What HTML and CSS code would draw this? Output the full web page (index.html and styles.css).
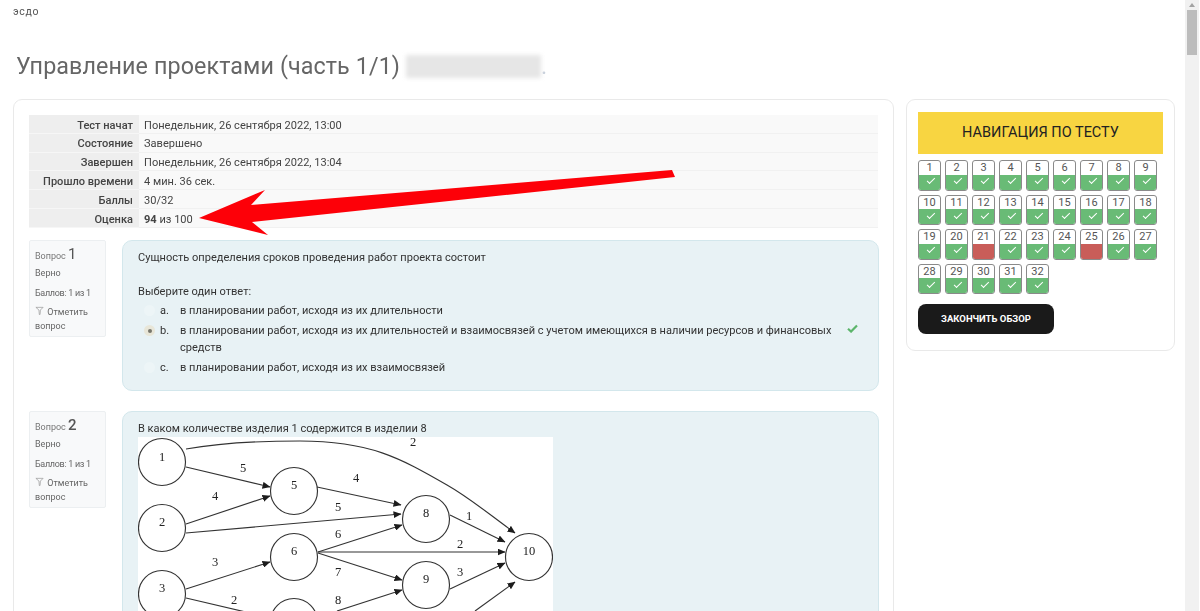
FILE: index.html
```html
<!DOCTYPE html>
<html lang="ru">
<head>
<meta charset="utf-8">
<title>Управление проектами</title>
<link rel="stylesheet" href="styles.css">
</head>
<body>
<div class="page">
  <div class="content">
    <div class="brand">эсдо</div>
    <h1 class="title">Управление проектами (часть 1/1) <span class="blurred"></span><span class="dot">.</span></h1>
    <div class="columns">
      <main class="card main-card">
        <div class="summary">
          <div class="k">Тест начат</div><div class="v">Понедельник, 26 сентября 2022, 13:00</div>
          <div class="k">Состояние</div><div class="v">Завершено</div>
          <div class="k">Завершен</div><div class="v">Понедельник, 26 сентября 2022, 13:04</div>
          <div class="k">Прошло времени</div><div class="v">4 мин. 36 сек.</div>
          <div class="k">Баллы</div><div class="v">30/32</div>
          <div class="k">Оценка</div><div class="v"><b>94</b> из 100</div>
        </div>

        <section class="question">
          <aside class="info">
            <div class="q-no">Вопрос <span>1</span></div>
            <div class="q-line">Верно</div>
            <div class="q-line">Баллов: 1 из 1</div>
            <div class="q-flag"><svg class="flag" viewBox="0 0 10 10"><path d="M1 1.5h8L6 4.5 5.6 9.5H4.8L4.4 4.5z" fill="none" stroke="#999" stroke-width=".8"/></svg> Отметить<br>вопрос</div>
          </aside>
          <div class="q-body">
            <div class="q-text">Сущность определения сроков проведения работ проекта состоит</div>
            <div class="q-prompt">Выберите один ответ:</div>
            <div class="answer"><span class="radio"></span><span class="letter">a.</span><span class="a-text">в планировании работ, исходя из их длительности</span></div>
            <div class="answer"><span class="radio checked"></span><span class="letter">b.</span><span class="a-text">в планировании работ, исходя из их длительностей и взаимосвязей с учетом имеющихся в наличии ресурсов и финансовых средств</span><svg class="ok" viewBox="0 0 12 10"><path d="M1 5.2 4.4 8.4 11 1.6" fill="none" stroke="#5cb56b" stroke-width="2.4"/></svg></div>
            <div class="answer"><span class="radio"></span><span class="letter">c.</span><span class="a-text">в планировании работ, исходя из их взаимосвязей</span></div>
          </div>
        </section>

        <section class="question second">
          <aside class="info">
            <div class="q-no">Вопрос <span class="strong">2</span></div>
            <div class="q-line">Верно</div>
            <div class="q-line">Баллов: 1 из 1</div>
            <div class="q-flag"><svg class="flag" viewBox="0 0 10 10"><path d="M1 1.5h8L6 4.5 5.6 9.5H4.8L4.4 4.5z" fill="none" stroke="#999" stroke-width=".8"/></svg> Отметить<br>вопрос</div>
          </aside>
          <div class="q-body">
            <div class="q-text tight">В каком количестве изделия 1 содержится в изделии 8</div>
            <svg class="diagram" viewBox="138 437 415 174">
              <defs>
                <marker id="ah" markerWidth="8" markerHeight="7" refX="7.5" refY="3.5" orient="auto" markerUnits="userSpaceOnUse"><path d="M0 0 8 3.5 0 7z" fill="#1c1c1c"/></marker>
              </defs>
              <g fill="none" stroke="#333" stroke-width="1.15">
                <circle cx="162" cy="462" r="23.5"/>
                <circle cx="162" cy="528" r="23.5"/>
                <circle cx="162" cy="594" r="23.5"/>
                <circle cx="294" cy="491" r="23.5"/>
                <circle cx="294" cy="557" r="23.5"/>
                <circle cx="294" cy="622" r="23.5"/>
                <circle cx="426" cy="519" r="23.5"/>
                <circle cx="426" cy="585" r="23.5"/>
                <circle cx="529" cy="557" r="23.5"/>
                <path marker-end="url(#ah)" d="M186 449C220 443 260 441 300 441C370 441 400 458 447 485C470 498 490 515 515 533"/>
                <path marker-end="url(#ah)" d="M186 467 270 487"/>
                <path marker-end="url(#ah)" d="M186 524 270 496"/>
                <path marker-end="url(#ah)" d="M186 533 401 514"/>
                <path marker-end="url(#ah)" d="M186 589 270 562"/>
                <path d="M186 598 250 613"/>
                <path marker-end="url(#ah)" d="M317 487 401 505"/>
                <path marker-end="url(#ah)" d="M318 552 402 525"/>
                <path marker-end="url(#ah)" d="M318 552H505"/>
                <path marker-end="url(#ah)" d="M318 553 402 580"/>
                <path marker-end="url(#ah)" d="M337 611 402 590"/>
                <path marker-end="url(#ah)" d="M450 515 505 542"/>
                <path marker-end="url(#ah)" d="M450 589 505 563"/>
                <path marker-end="url(#ah)" d="M475 611 515 582"/>
              </g>
              <g class="d-text">
                <text x="162" y="461">1</text><text x="162" y="526">2</text><text x="162" y="592">3</text>
                <text x="294" y="489">5</text><text x="294" y="555">6</text>
                <text x="426" y="517">8</text><text x="426" y="583">9</text><text x="529" y="555">10</text>
                <text x="243" y="472">5</text><text x="215" y="500">4</text><text x="215" y="566">3</text><text x="234" y="604">2</text>
                <text x="413" y="446">2</text><text x="356" y="482">4</text><text x="338" y="511">5</text><text x="338" y="538">6</text><text x="338" y="576">7</text><text x="338" y="604">8</text>
                <text x="469" y="520">1</text><text x="460" y="548">2</text><text x="460" y="576">3</text>
              </g>
            </svg>
          </div>
        </section>
      </main>

      <aside class="card nav-card">
        <div class="nav-title">НАВИГАЦИЯ ПО ТЕСТУ</div>
        <div class="nav-grid">
          <a class="b">1<i></i></a><a class="b">2<i></i></a><a class="b">3<i></i></a><a class="b">4<i></i></a><a class="b">5<i></i></a><a class="b">6<i></i></a><a class="b">7<i></i></a><a class="b">8<i></i></a><a class="b">9<i></i></a>
          <a class="b">10<i></i></a><a class="b">11<i></i></a><a class="b">12<i></i></a><a class="b">13<i></i></a><a class="b">14<i></i></a><a class="b">15<i></i></a><a class="b">16<i></i></a><a class="b">17<i></i></a><a class="b">18<i></i></a>
          <a class="b">19<i></i></a><a class="b">20<i></i></a><a class="b bad">21<i></i></a><a class="b">22<i></i></a><a class="b">23<i></i></a><a class="b">24<i></i></a><a class="b bad">25<i></i></a><a class="b">26<i></i></a><a class="b">27<i></i></a>
          <a class="b">28<i></i></a><a class="b">29<i></i></a><a class="b">30<i></i></a><a class="b">31<i></i></a><a class="b">32<i></i></a>
        </div>
        <div class="finish">ЗАКОНЧИТЬ ОБЗОР</div>
      </aside>
    </div>
  </div>
  <div class="scrollbar"><span class="up"></span><span class="thumb"></span></div>
</div>
<svg class="arrow" viewBox="0 0 1200 611"><polygon points="199,218 265,190 251,205 672,170 675,177 252,222 268,235" fill="#fd0008"/></svg>
</body>
</html>
```

FILE: styles.css
```css
* { box-sizing: border-box; }
html, body { margin: 0; height: 611px; overflow: hidden; background: #fff; }
body { font-family: Roboto, "Liberation Sans", sans-serif; font-size: 11.05px; color: #444; }
.page { display: flex; height: 611px; filter: blur(.35px); }
.content { flex: 1; min-width: 0; padding-left: 13px; padding-right: 10px; }
.brand { font-size: 10.5px; letter-spacing: .7px; color: #555; height: 38px; padding-top: 6px; line-height: 12px; }
.title { display: flex; align-items: center; margin: 0 0 6px 3px; height: 55px; font-size: 23.3px; font-weight: 400; color: #666; white-space: pre; letter-spacing: .1px; }
.blurred { display: block; width: 135px; height: 23px; margin-top: 2px; background: #e6e6e6; filter: blur(2px); }
.dot { color: #c8d0dc; }
.columns { display: flex; gap: 12px; align-items: flex-start; }
.card { background: #fff; border: 1px solid #e9e9e9; border-radius: 9px; flex: none; }
.main-card { width: 881px; height: 560px; padding: 15px; overflow: hidden; }
.summary { display: grid; grid-template-columns: 110px 739px; grid-auto-rows: 18.83px; line-height: 18px; }
.k { background: #eee; text-align: right; padding: 1.5px 6px 0 0; font-weight: 500; border-bottom: 1px solid #f6f6f6; }
.v { background: #f9f9f9; padding: 1.5px 0 0 5px; border-bottom: 1px solid #f1f1f1; }
.v b { font-weight: 700; }
.question { display: flex; gap: 16px; margin-top: 12px; align-items: flex-start; }
.question.second { margin-top: 20px; }
.info { flex: 0 0 77px; height: 97px; background: #f8f9fa; border: 1px solid #eceff1; border-radius: 2px; padding: 5px 0 0 5px; font-size: 9px; color: #666; white-space: nowrap; }
.q-no { height: 16px; line-height: 16px; color: #777; }
.q-no span { font-size: 15px; color: #555; }
.q-no .strong { font-weight: 500; }
.q-line { margin-top: 3px; height: 16px; line-height: 16px; }
.q-line + .q-line { margin-top: 4px; letter-spacing: -.3px; }
.q-flag { margin-top: 4px; line-height: 14px; }
.flag { width: 9px; height: 9px; margin-right: 1px; }
.q-body { flex: 0 0 757px; min-width: 0; background: #e8f2f5; border: 1px solid #d3e7ec; border-radius: 10px; padding: 8px 15px 12px; line-height: 17px; color: #333; }
.q-prompt { margin-top: 17px; margin-bottom: 1px; }
.tight { height: 17px; }
.answer { display: grid; grid-template-columns: 16px 20px 655px 22px; padding: 1.5px 0 1.5px 6px; }
.radio { width: 11px; height: 11px; border-radius: 50%; background: #edf5f7; margin-top: 3px; position: relative; }
.radio.checked { background: #e8e6d8; }
.radio.checked::after { content: ""; position: absolute; left: 3.5px; top: 3.5px; width: 4px; height: 4px; border-radius: 50%; background: #77776c; }
.ok { width: 11px; height: 9px; margin: 2px 0 0 12px; }
.diagram { display: block; width: 415px; height: 174px; background: #fff; }
.d-text text { font-family: "Liberation Serif", serif; font-size: 12.5px; fill: #222; text-anchor: middle; }
.nav-card { width: 269px; height: 252px; padding: 12px 11px; }
.nav-title { height: 42px; width: 245px; background: #f8d541; color: #222; font-size: 14.5px; line-height: 42px; text-align: center; }
.nav-grid { display: grid; grid-template-columns: repeat(9, 23px); column-gap: 4px; grid-auto-rows: 30.5px; row-gap: 4px; margin-top: 6px; }
.b { display: block; border: 1px solid #8a8a8a; border-radius: 3px; background: #fff; font-size: 11px; line-height: 13px; text-align: center; color: #555; position: relative; overflow: hidden; }
.b i { position: absolute; left: 0; right: 0; bottom: 0; height: 15px; background: #69bb76; }
.b i::after { content: ""; position: absolute; left: 7.5px; top: 3.5px; width: 6.5px; height: 3px; border-left: 1.8px solid #fff; border-bottom: 1.8px solid #fff; transform: rotate(-45deg); }
.bad i { background: #c95d59; }
.bad i::after { display: none; }
.finish { width: 136px; height: 30px; margin-top: 10px; background: #1a1a1a; color: #fff; border-radius: 8px; font-size: 9.5px; font-weight: 700; line-height: 30px; text-align: center; }
.scrollbar { flex: 0 0 14px; margin-right: 1px; background: #f1f1f1; position: relative; padding: 3px 2px 0; }
.up { display: block; width: 0; margin: 0 auto; border: 3.5px solid transparent; border-top: 0; border-bottom: 4px solid #a3a3a3; }
.thumb { display: block; width: 10px; height: 45px; position: absolute; top: 10px; left: 2px; background: #bcbcbc; }
.arrow { position: absolute; left: 0; top: 0; width: 1200px; height: 611px; filter: blur(.4px); }
```
